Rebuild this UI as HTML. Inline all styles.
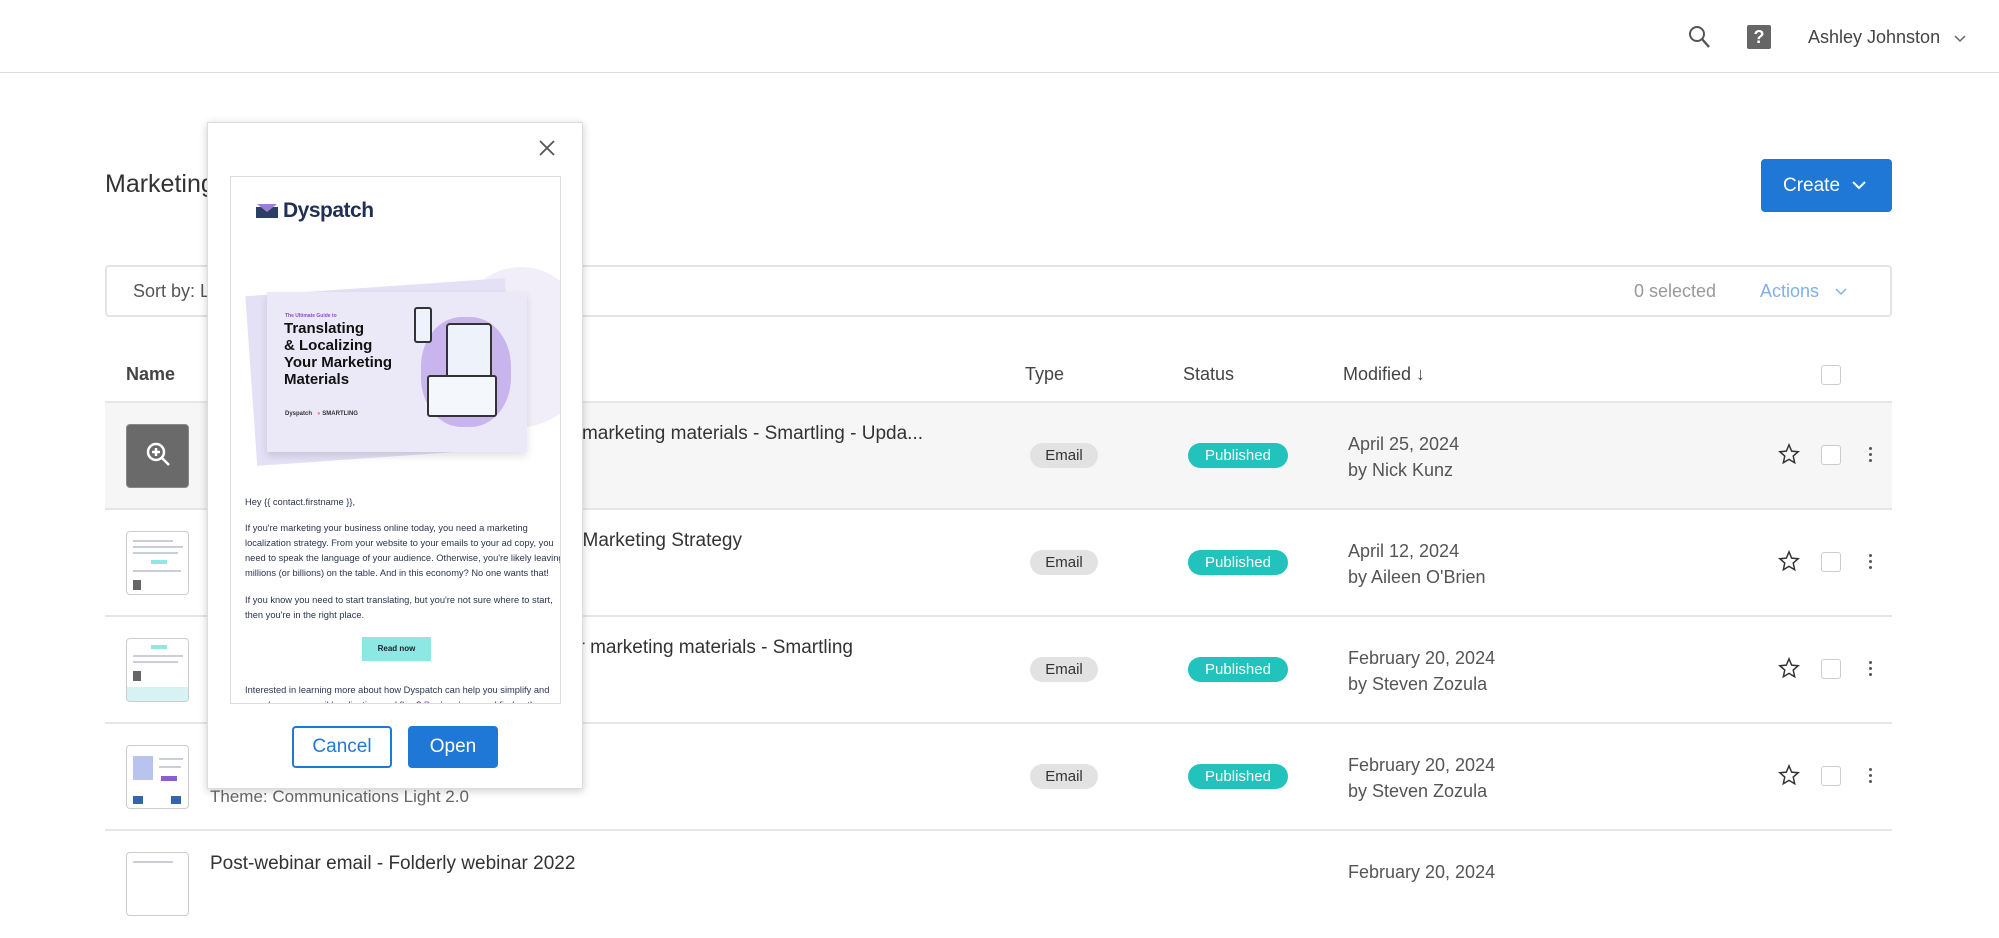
<!DOCTYPE html>
<html><head><meta charset="utf-8"><style>
*{box-sizing:border-box;margin:0;padding:0}
body{width:1999px;height:869px;overflow:hidden;background:#fff;font-family:"Liberation Sans",sans-serif;color:#333;position:relative}
.a{position:absolute;white-space:nowrap}
.hdr{position:absolute;left:0;top:0;width:1999px;height:73px;border-bottom:1px solid #ddd}
.row{position:absolute;left:105px;width:1787px;height:107px;border-bottom:2px solid #e6e6e6}
.pill{position:absolute;height:25px;border-radius:13px;font-size:15px;line-height:25px;text-align:center}
.email{background:#e2e2e2;color:#333;width:68px;left:925px}
.pub{background:#22c2bd;color:#fff;width:100px;left:1083px}
.date{position:absolute;left:1243px;font-size:18px;color:#555;line-height:26px}
.clip{position:absolute;left:105px;top:20px;height:28px;overflow:hidden}
.name{position:absolute;font-size:19px;color:#333;white-space:nowrap}
.clip .name{right:0;top:0}
.thumb{position:absolute;left:21px;width:63px;height:64px;border:1px solid #ccc;border-radius:4px;background:#fff;overflow:hidden}
.thumb i{position:absolute;height:2px;background:#c9ced8;left:6px}
.cb{position:absolute;width:20px;height:20px;border:1px solid #ccc;border-radius:3px;background:#fff}
.keb{position:absolute;left:1764px;width:3px}
.keb b{display:block;width:3px;height:3px;border-radius:50%;background:#555;margin-bottom:3px}
.p{font-size:9.3px;line-height:15px;color:#2b3550}
</style></head><body>
<div class="hdr"></div>
<svg class="a" style="left:1688px;top:25px" width="24" height="26" viewBox="0 0 24 26"><circle cx="9" cy="9" r="7" fill="none" stroke="#555" stroke-width="2"/><path d="M14 14l7 8" stroke="#555" stroke-width="2.4"/></svg>
<div class="a" style="left:1747px;top:25px;width:24px;height:24px;background:#666;border-radius:2px;color:#fff;font-size:18px;font-weight:bold;text-align:center;line-height:24px">?</div>
<div class="a" style="left:1808px;top:27px;font-size:18px;color:#444">Ashley Johnston</div>
<svg class="a" style="left:1954px;top:34px" width="12" height="10"><path d="M1 2l5 5 5-5" fill="none" stroke="#666" stroke-width="1.5"/></svg>

<div class="a" style="left:105px;top:170px;font-size:25px;color:#333">Marketing</div>
<div class="a" style="left:1761px;top:159px;width:131px;height:53px;background:#1f78d6;border-radius:4px;color:#fff;font-size:19px;line-height:53px;padding-left:22px">Create</div>
<svg class="a" style="left:1852px;top:180px" width="14" height="10"><path d="M1 2l6 6 6-6" fill="none" stroke="#fff" stroke-width="2"/></svg>

<div class="a" style="left:105px;top:265px;width:1787px;height:52px;border:2px solid #e4e4e4;border-radius:4px"></div>
<div class="a" style="left:133px;top:281px;font-size:18px;color:#555">Sort by: L</div>
<div class="a" style="left:1634px;top:281px;font-size:18px;color:#999">0 selected</div>
<div class="a" style="left:1760px;top:281px;font-size:18px;color:#7fb0ec">Actions</div>
<svg class="a" style="left:1835px;top:287px" width="12" height="10"><path d="M1 2l5 5 5-5" fill="none" stroke="#7fb0ec" stroke-width="1.5"/></svg>

<div class="a" style="left:126px;top:364px;font-size:18px;color:#444;font-weight:bold">Name</div>
<div class="a" style="left:1025px;top:364px;font-size:18px;color:#444">Type</div>
<div class="a" style="left:1183px;top:364px;font-size:18px;color:#444">Status</div>
<div class="a" style="left:1343px;top:364px;font-size:18px;color:#444">Modified ↓</div>
<div class="cb" style="left:1821px;top:365px"></div>
<div class="a" style="left:105px;top:401px;width:1787px;height:2px;background:#e6e6e6"></div>

<div class="row" style="top:403px;background:#f6f6f6">
 <div class="thumb" style="top:21px;background:#6a6a6a;border-color:#888"></div>
 <svg class="a" style="left:40px;top:38px" width="30" height="30"><circle cx="11" cy="11" r="8" fill="none" stroke="#fff" stroke-width="2.5"/><path d="M11 7v8M7 11h8M17 17l7 7" stroke="#fff" stroke-width="2.5"/></svg>
 <div class="clip" style="width:713px"><div class="name">The Ultimate Guide to Translating &amp; Localizing your marketing materials - Smartling - Upda...</div></div>
 <div class="pill email" style="top:40px">Email</div><div class="pill pub" style="top:40px">Published</div>
 <div class="date" style="top:28px">April 25, 2024<br>by Nick Kunz</div>
 <svg class="a" style="left:1673px;top:40px" width="22" height="22" viewBox="0 0 24 24"><path d="M12 2l2.9 6.9 7.1.6-5.4 4.7 1.6 7.3L12 17.8 5.8 21.5l1.6-7.3L2 9.5l7.1-.6z" fill="none" stroke="#333" stroke-width="1.6"/></svg>
 <div class="cb" style="left:1716px;top:42px"></div>
 <div class="keb" style="top:44px"><b></b><b></b><b></b></div>
</div>
<div class="row" style="top:510px">
 <div class="thumb" style="top:21px"><i style="top:8px;width:40px"></i><i style="top:14px;width:50px"></i><i style="top:20px;width:45px"></i><i style="top:28px;left:24px;width:16px;height:4px;background:#8de8e3"></i><i style="top:38px;width:48px"></i><i style="top:48px;width:8px;height:10px;background:#666"></i></div>
 <div class="clip" style="width:532px"><div class="name">Building a Global Email Marketing Strategy</div></div>
 <div class="pill email" style="top:40px">Email</div><div class="pill pub" style="top:40px">Published</div>
 <div class="date" style="top:28px">April 12, 2024<br>by Aileen O'Brien</div>
 <svg class="a" style="left:1673px;top:40px" width="22" height="22" viewBox="0 0 24 24"><path d="M12 2l2.9 6.9 7.1.6-5.4 4.7 1.6 7.3L12 17.8 5.8 21.5l1.6-7.3L2 9.5l7.1-.6z" fill="none" stroke="#333" stroke-width="1.6"/></svg>
 <div class="cb" style="left:1716px;top:42px"></div>
 <div class="keb" style="top:44px"><b></b><b></b><b></b></div>
</div>
<div class="row" style="top:617px">
 <div class="thumb" style="top:21px"><i style="top:6px;left:24px;width:16px;height:4px;background:#8de8e3"></i><i style="top:16px;width:50px"></i><i style="top:22px;width:45px"></i><i style="top:32px;width:8px;height:10px;background:#666"></i><i style="top:48px;left:0;width:63px;height:16px;background:#d6f3f2"></i></div>
 <div class="clip" style="width:643px"><div class="name">The Ultimate Guide to Translating &amp; Localizing your marketing materials - Smartling</div></div>
 <div class="pill email" style="top:40px">Email</div><div class="pill pub" style="top:40px">Published</div>
 <div class="date" style="top:28px">February 20, 2024<br>by Steven Zozula</div>
 <svg class="a" style="left:1673px;top:40px" width="22" height="22" viewBox="0 0 24 24"><path d="M12 2l2.9 6.9 7.1.6-5.4 4.7 1.6 7.3L12 17.8 5.8 21.5l1.6-7.3L2 9.5l7.1-.6z" fill="none" stroke="#333" stroke-width="1.6"/></svg>
 <div class="cb" style="left:1716px;top:42px"></div>
 <div class="keb" style="top:44px"><b></b><b></b><b></b></div>
</div>
<div class="row" style="top:724px">
 <div class="thumb" style="top:21px"><i style="top:10px;width:20px;height:24px;background:#b9c4ee"></i><i style="top:12px;left:32px;width:24px"></i><i style="top:20px;left:32px;width:22px"></i><i style="top:30px;left:34px;width:16px;height:5px;background:#8a5fd0"></i><i style="top:50px;width:10px;height:8px;background:#36a"></i><i style="top:50px;left:44px;width:10px;height:8px;background:#36a"></i></div>
 <div class="name" style="left:105px;top:22px">Webinar invitation email</div>
 <div class="a" style="left:105px;top:63px;font-size:17px;color:#666">Theme: Communications Light 2.0</div>
 <div class="pill email" style="top:40px">Email</div><div class="pill pub" style="top:40px">Published</div>
 <div class="date" style="top:28px">February 20, 2024<br>by Steven Zozula</div>
 <svg class="a" style="left:1673px;top:40px" width="22" height="22" viewBox="0 0 24 24"><path d="M12 2l2.9 6.9 7.1.6-5.4 4.7 1.6 7.3L12 17.8 5.8 21.5l1.6-7.3L2 9.5l7.1-.6z" fill="none" stroke="#333" stroke-width="1.6"/></svg>
 <div class="cb" style="left:1716px;top:42px"></div>
 <div class="keb" style="top:44px"><b></b><b></b><b></b></div>
</div>
<div class="row" style="top:831px;border:none">
 <div class="thumb" style="top:21px"><i style="top:8px;width:40px"></i></div>
 <div class="name" style="left:105px;top:22px">Post-webinar email - Folderly webinar 2022</div>
 <div class="date" style="top:28px">February 20, 2024</div>
</div>

<!-- modal -->
<div class="a" style="left:207px;top:122px;width:376px;height:667px;background:#fff;border:1px solid #ddd;box-shadow:0 2px 8px rgba(0,0,0,.2)"></div>
<svg class="a" style="left:539px;top:140px" width="16" height="16"><path d="M1 1l14 14M15 1L1 15" stroke="#555" stroke-width="1.8"/></svg>
<div class="a" style="left:230px;top:176px;width:331px;height:528px;border:1px solid #ddd;overflow:hidden;background:#fff">
 <svg class="a" style="left:24px;top:26px" width="24" height="16"><path d="M1 4h22v11H1z" fill="#2b3f66"/><path d="M2 1h20l-10 8z" fill="#9b7fd6"/></svg>
 <div class="a" style="left:52px;top:22px;font-size:21px;font-weight:bold;color:#1f2f55;letter-spacing:-.5px">Dyspatch</div>
 <div class="a" style="left:220px;top:90px;width:140px;height:160px;border-radius:50%;background:#f2eef9"></div>
 <div class="a" style="left:20px;top:110px;width:260px;height:170px;background:#e4e0f6;transform:rotate(-4deg)"></div>
 <div class="a" style="left:36px;top:115px;width:260px;height:160px;background:#ebe9f8;box-shadow:0 4px 8px rgba(0,0,0,.12)"></div>
 <div class="a" style="left:190px;top:140px;width:90px;height:110px;border-radius:45%;background:#c9b5ee"></div>
 <div class="a" style="left:215px;top:146px;width:46px;height:64px;border:2px solid #333;border-radius:4px;background:#eef3fb"></div>
 <div class="a" style="left:196px;top:198px;width:70px;height:42px;border:2px solid #333;border-radius:3px;background:#f4f7fc"></div>
 <div class="a" style="left:183px;top:130px;width:18px;height:36px;border:2px solid #333;border-radius:3px;background:#eef3fb"></div>
 <div class="a" style="left:54px;top:136px;font-size:5px;color:#8a4fc8;font-weight:bold">The Ultimate Guide to</div>
 <div class="a" style="left:53px;top:143px;font-size:15px;line-height:17px;font-weight:bold;color:#111">Translating<br>&amp; Localizing<br>Your Marketing<br>Materials</div>
 <div class="a" style="left:54px;top:234px;font-size:6px;color:#333;font-weight:bold">Dyspatch &nbsp; <span style="color:#e88">●</span> SMARTLING</div>
 <div class="a p" style="left:14px;top:318px">Hey {{ contact.firstname }},</div>
 <div class="a p" style="left:14px;top:344px">If you're marketing your business online today, you need a marketing<br>localization strategy. From your website to your emails to your ad copy, you<br>need to speak the language of your audience. Otherwise, you're likely leaving<br>millions (or billions) on the table. And in this economy? No one wants that!</div>
 <div class="a p" style="left:14px;top:416px">If you know you need to start translating, but you're not sure where to start,<br>then you're in the right place.</div>
 <div class="a" style="left:131px;top:460px;width:69px;height:24px;background:#8de8e3;font-size:8px;font-weight:bold;text-align:center;line-height:24px;color:#223">Read now</div>
 <div class="a p" style="left:14px;top:506px">Interested in learning more about how Dyspatch can help you simplify and<br>speed up your email localization workflow? <span style="color:#8a4fc8">Book a demo</span> and find out!</div>
</div>
<div class="a" style="left:292px;top:726px;width:100px;height:42px;border:2px solid #1f78d6;border-radius:4px;color:#1f78d6;font-size:19px;text-align:center;line-height:38px">Cancel</div>
<div class="a" style="left:408px;top:726px;width:90px;height:42px;background:#1f78d6;border-radius:4px;color:#fff;font-size:19px;text-align:center;line-height:42px">Open</div>
</body></html>
